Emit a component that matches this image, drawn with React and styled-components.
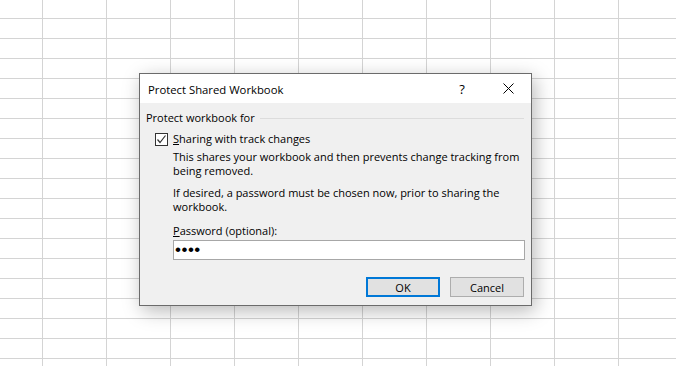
import React from 'react'
import styled, { createGlobalStyle } from 'styled-components'

const GlobalStyle = createGlobalStyle`
  html, body {
    margin: 0;
    padding: 0;
    background: #fff;
  }
  body {
    font-family: "Open Sans", "Noto Sans", Arial, sans-serif;
  }
`

const Sheet = styled.div`
  width: 676px;
  height: 366px;
  box-sizing: border-box;
  padding: 73px 0 0 139px;
  overflow: hidden;
  background-color: #fff;
  background-image:
    linear-gradient(to right, #d4d4d4 1px, transparent 1px),
    linear-gradient(to bottom, #d4d4d4 1px, transparent 1px);
  background-size: 64px 100%, 100% 20px;
  background-position: 42px 0, 0 18px;
`

const Dialog = styled.div`
  width: 393px;
  height: 233px;
  box-sizing: border-box;
  border: 1px solid #6b6b6b;
  background: #f0f0f0;
  box-shadow: 3px 5px 18px rgba(0, 0, 0, 0.28);
  display: flex;
  flex-direction: column;
  color: #000;
  font-size: 11px;
`

const TitleBar = styled.div`
  height: 29px;
  background: #fff;
  display: flex;
  align-items: center;
  padding-left: 8px;
`

const Title = styled.div`
  flex: 1;
  font-size: 11.3px;
  padding-top: 1px;
`

const TitleButton = styled.div`
  width: 46px;
  height: 29px;
  display: flex;
  align-items: center;
  justify-content: center;
  font-size: 13px;
`

const Body = styled.div`
  flex: 1;
  padding: 8px 7px 8px 6px;
  display: flex;
  flex-direction: column;
  line-height: 14px;
  white-space: nowrap;
`

const GroupHeader = styled.div`
  display: flex;
  align-items: center;
  gap: 5px;
  &::after {
    content: '';
    flex: 1;
    height: 1px;
    background: #dcdcdc;
  }
`

const CheckRow = styled.label`
  display: flex;
  align-items: center;
  margin: 7px 0 0 9px;
  gap: 5px;
`

const Box = styled.span`
  width: 11px;
  height: 11px;
  border: 1px solid #333;
  background: #fff;
  display: inline-flex;
  align-items: center;
  justify-content: center;
`

const Indent = styled.div`
  margin-left: 27px;
  margin-top: ${(p) => p.$top}px;
`

const Input = styled.input`
  display: block;
  box-sizing: border-box;
  width: 352px;
  height: 20px;
  margin: 2px 0 0 27px;
  border: 1px solid #a7a7a7;
  background: #fff;
  padding: 0 1px;
  font-size: 17px;
  letter-spacing: 0.5px;
  font-family: Arial, sans-serif;
  outline: none;
`

const Buttons = styled.div`
  display: flex;
  justify-content: flex-end;
  gap: 10px;
  margin-top: 17px;
`

const Button = styled.button`
  width: 74px;
  height: 20px;
  box-sizing: border-box;
  background: #e1e1e1;
  border: ${(p) => (p.$primary ? '2px solid #0078d7' : '1px solid #adadad')};
  font-family: inherit;
  font-size: 11px;
  color: #000;
  padding: 0;
`

const Key = styled.span`
  text-decoration: underline;
`

const App = () => (
  <>
    <GlobalStyle />
    <Sheet>
      <Dialog>
        <TitleBar>
          <Title>Protect Shared Workbook</Title>
          <TitleButton>?</TitleButton>
          <TitleButton>
            <svg width="11" height="11" viewBox="0 0 11 11">
              <path d="M0.5 0.5L10.5 10.5M10.5 0.5L0.5 10.5" stroke="#000" strokeWidth="1" />
            </svg>
          </TitleButton>
        </TitleBar>
        <Body>
          <GroupHeader>Protect workbook for</GroupHeader>
          <CheckRow>
            <Box>
              <svg width="11" height="11" viewBox="0 0 11 11">
                <path d="M1.5 5.5L4 8.5L9.5 1.5" fill="none" stroke="#333" strokeWidth="1.2" />
              </svg>
            </Box>
            <span><Key>S</Key>haring with track changes</span>
          </CheckRow>
          <Indent $top={4}>
            This shares your workbook and then prevents change tracking from<br />
            being removed.
          </Indent>
          <Indent $top={8}>
            If desired, a password must be chosen now, prior to sharing the<br />
            workbook.
          </Indent>
          <Indent $top={10}>
            <Key>P</Key>assword (optional):
          </Indent>
          <Input type="password" defaultValue="abcd" readOnly />
          <Buttons>
            <Button $primary>OK</Button>
            <Button>Cancel</Button>
          </Buttons>
        </Body>
      </Dialog>
    </Sheet>
  </>
)

export default App
